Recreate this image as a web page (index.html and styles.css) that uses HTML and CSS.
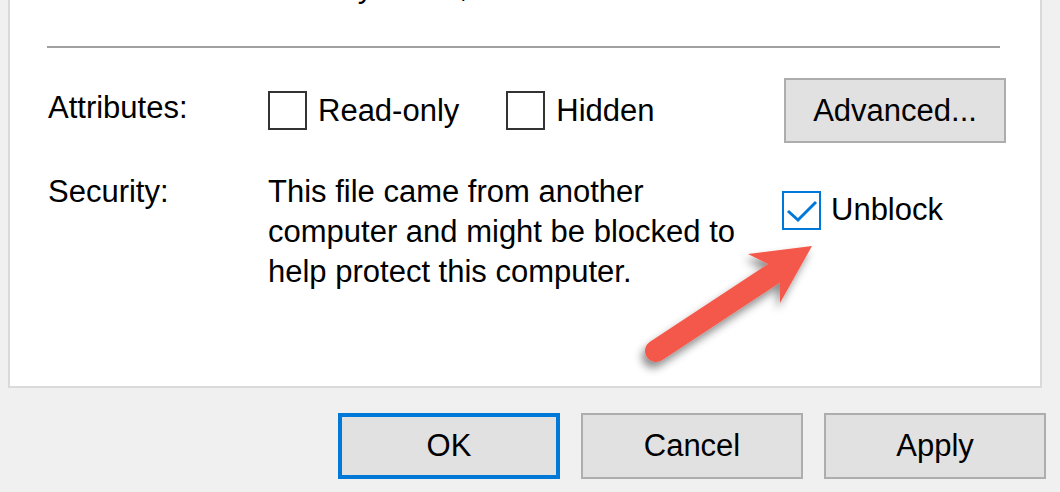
FILE: index.html
```html
<!DOCTYPE html>
<html>
<head>
<meta charset="utf-8">
<title>File Properties</title>
<link rel="stylesheet" href="styles.css">
</head>
<body>
	<div class="panel">
		<div class="row prev">
			<label class="caption">Accessed:</label>
			<span class="value">Sunday 14:52, 3 June 2018</span>
		</div>
		<hr class="sep">

		<div class="row attrs">
			<label class="caption">Attributes:</label>
			<label class="check"><span class="box"></span>Read-only</label>
			<label class="check hidden-opt"><span class="box"></span>Hidden</label>
			<button class="btn advanced">Advanced...</button>
		</div>

		<div class="row security">
			<label class="caption">Security:</label>
			<p class="note">This file came from another computer and might be blocked to help protect this computer.</p>
			<label class="check unblock">
				<span class="box checked">
					<svg width="35" height="35" viewBox="0 0 35 35"><polyline points="4,18 14,27 32,9" fill="none" stroke="#0078d7" stroke-width="3"/></svg>
				</span>Unblock
			</label>
		</div>
	</div>

	<div class="actions">
		<button class="btn default">OK</button>
		<button class="btn">Cancel</button>
		<button class="btn">Apply</button>
	</div>

	<!-- callout arrow drawn over the dialog -->
	<svg class="pointer" width="1060" height="492" viewBox="0 0 1060 492">
		<defs>
			<filter id="shade" x="-20%" y="-20%" width="140%" height="150%">
				<feDropShadow dx="-3" dy="6" stdDeviation="4" flood-color="#000" flood-opacity="0.45"/>
			</filter>
		</defs>
		<g filter="url(#shade)">
			<line x1="656" y1="351" x2="776" y2="272" stroke="#f4594b" stroke-width="22" stroke-linecap="round"/>
			<polygon points="812,246 748,254 768,264 780,282 780,303" fill="#f4594b"/>
		</g>
	</svg>
</body>
</html>
```

FILE: styles.css
```css
body {
	margin: 0;
	height: 492px;
	overflow: hidden;
	background: #f0f0f0;
	font-family: "Liberation Sans", Arial, sans-serif;
	font-size: 31px;
	line-height: 36px;
	color: #000;
}

.panel {
	margin: -60px 18px 0 8px;
	height: 448px;
	box-sizing: border-box;
	background: #fff;
	border: 2px solid #dadada;
}

.row {
	display: flex;
	padding-left: 38px;
}

.caption {
	width: 220px;
	flex: none;
}

.prev {
	height: 63px;
	align-items: flex-end;
}

.sep {
	border: 0;
	height: 2px;
	width: 953px;
	background: #a0a0a0;
	margin: 41px 0 0 37px;
}

.attrs {
	align-items: center;
	margin-top: 30px;
	padding-right: 34px;
}

.attrs .caption {
	margin-bottom: 6px;
}

.check {
	display: flex;
	align-items: center;
	gap: 11px;
}

.hidden-opt {
	margin-left: 47px;
}

.box {
	width: 39px;
	height: 39px;
	box-sizing: border-box;
	border: 2px solid #333;
	background: #fff;
	flex: none;
}

.box svg {
	display: block;
}

.box.checked {
	border-color: #0078d7;
}

.btn {
	font: inherit;
	color: #000;
	width: 222px;
	height: 66px;
	padding: 0;
	background: #e1e1e1;
	border: 2px solid #adadad;
}

.advanced {
	margin-left: auto;
	height: 65px;
}

.security {
	margin-top: 29px;
	line-height: 40px;
}

.note {
	margin: 0;
	width: 495px;
}

.unblock {
	align-self: flex-start;
	margin: 18px 0 0 19px;
	gap: 10px;
}

.actions {
	display: flex;
	justify-content: flex-end;
	gap: 21px;
	margin-top: 25px;
	padding-right: 14px;
}

.btn.default {
	border: 4px solid #0078d7;
}

.pointer {
	position: absolute;
	left: 0;
	top: 0;
	pointer-events: none;
}
```
